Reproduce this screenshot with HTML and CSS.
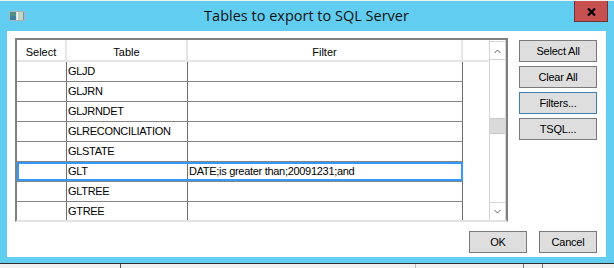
FILE: index.html
```html
<!DOCTYPE html>
<html lang="en">
<head>
    <meta charset="UTF-8">
    <title>Tables to export to SQL Server</title>
    <link rel="stylesheet" href="styles.css">
</head>
<body>
    <div class="window">
        <div class="titlebar">
            <div class="title-left">
                <svg class="app-icon" viewBox="0 0 16 10" width="16" height="10">
                    <rect x="0.5" y="0.5" width="15" height="9" fill="#dfe6ea" stroke="#a9b4bb"/>
                    <rect x="1" y="1" width="6" height="8" fill="#4f8f82"/>
                    <rect x="1" y="5" width="6" height="4" fill="#3f7fa0"/>
                    <rect x="8" y="1" width="1" height="8" fill="#ffffff"/>
                    <rect x="9" y="1" width="5" height="8" fill="#bcd9bf"/>
                    <rect x="14" y="1" width="1" height="8" fill="#7894aa"/>
                </svg>
            </div>
            <div class="title-text">Tables to export to SQL Server</div>
            <div class="title-right">
                <div class="close-btn">
                    <svg viewBox="0 0 9 8" width="9" height="8">
                        <path d="M1 0.5 L8 7.5 M8 0.5 L1 7.5" stroke="#000" stroke-width="2.2" fill="none"/>
                    </svg>
                </div>
            </div>
        </div>
        <div class="client">
            <div class="top-area">
                <div class="grid">
                    <div class="grid-main">
                        <div class="grid-header">
                            <div class="hcell col-select">Select</div>
                            <div class="hcell col-table">Table</div>
                            <div class="hcell col-filter">Filter</div>
                            <div class="hcell col-blank"></div>
                        </div>
                        <div class="grid-body">
                            <div class="row"><div class="cell col-select"></div><div class="cell col-table">GLJD</div><div class="cell col-filter"></div></div>
                            <div class="row"><div class="cell col-select"></div><div class="cell col-table">GLJRN</div><div class="cell col-filter"></div></div>
                            <div class="row"><div class="cell col-select"></div><div class="cell col-table">GLJRNDET</div><div class="cell col-filter"></div></div>
                            <div class="row"><div class="cell col-select"></div><div class="cell col-table">GLRECONCILIATION</div><div class="cell col-filter"></div></div>
                            <div class="row"><div class="cell col-select"></div><div class="cell col-table">GLSTATE</div><div class="cell col-filter"></div></div>
                            <div class="row current"><div class="cell col-select"></div><div class="cell col-table">GLT</div><div class="cell col-filter">DATE;is greater than;20091231;and</div></div>
                            <div class="row"><div class="cell col-select"></div><div class="cell col-table">GLTREE</div><div class="cell col-filter"></div></div>
                            <div class="row"><div class="cell col-select"></div><div class="cell col-table">GTREE</div><div class="cell col-filter"></div></div>
                        </div>
                    </div>
                    <div class="vscroll">
                        <div class="scroll-btn up">
                            <svg viewBox="0 0 7 4" width="7" height="4"><polyline points="0.5,4 3.5,1 6.5,4" stroke="#606060" fill="none"/></svg>
                        </div>
                        <div class="scroll-track"><div class="scroll-thumb"></div></div>
                        <div class="scroll-btn down">
                            <svg viewBox="0 0 7 4" width="7" height="4"><polyline points="0.5,0 3.5,3 6.5,0" stroke="#606060" fill="none"/></svg>
                        </div>
                    </div>
                </div>
                <div class="side-buttons">
                    <button class="btn">Select All</button>
                    <button class="btn">Clear All</button>
                    <button class="btn btn-focus">Filters...</button>
                    <button class="btn">TSQL...</button>
                </div>
            </div>
            <div class="bottom-buttons">
                <button class="btn btn-small">OK</button>
                <button class="btn btn-small">Cancel</button>
            </div>
        </div>
    </div>
    <div class="behind">
        <div class="behind-a"></div>
        <div class="behind-b"></div>
        <div class="behind-c"></div>
    </div>
</body>
</html>
```

FILE: styles.css
```css
body {
    margin: 0;
    padding-top: 1px;
    background-color: #f0f0f0;
    font-family: "Liberation Sans", Arial, sans-serif;
    font-size: 11px;
    color: #000;
    overflow: hidden;
}
.window {
    width: 599px;
    padding: 0 8px 6px 7px;
    background-color: #61cdf0;
}
.titlebar {
    height: 30px;
    display: grid;
    grid-template-columns: 1fr auto 1fr;
}
.title-left {
    padding: 10px 0 0 2px;
}
.app-icon {
    display: block;
}
.title-text {
    font-family: "Open Sans", "Noto Sans", sans-serif;
    font-size: 14.5px;
    line-height: 30px;
    color: #111;
}
.title-right {
    display: flex;
    justify-content: flex-end;
    align-items: flex-start;
}
.close-btn {
    width: 32px;
    height: 19px;
    margin-right: -2px;
    background-color: #c75050;
    border: 1px solid #6b3535;
    border-top: none;
    padding-top: 1px;
    display: flex;
    align-items: center;
    justify-content: center;
}
.close-btn svg {
    display: block;
}
.client {
    height: 226px;
    box-sizing: border-box;
    background-color: #fff;
    padding: 7px 9px 4px 8px;
    display: flex;
    flex-direction: column;
}
.top-area {
    display: flex;
    height: 184px;
}
.grid {
    width: 489px;
    height: 180px;
    border: 2px solid #808080;
    border-bottom-color: #e3e3e3;
    display: flex;
    background-color: #fff;
}
.grid-main {
    width: 472px;
}
.grid-header {
    display: flex;
    height: 22px;
    box-sizing: border-box;
    border-bottom: 2px solid #e6e6e6;
}
.hcell {
    box-sizing: border-box;
    border-right: 2px solid #e6e6e6;
    text-align: center;
    padding-top: 4px;
    line-height: 16px;
}
.hcell.col-blank {
    border-right: none;
}
.col-select {
    width: 50px;
}
.col-table {
    width: 121px;
}
.col-filter {
    width: 275px;
}
.col-blank {
    width: 26px;
}
.grid-body {
    height: 158px;
    overflow: hidden;
}
.row {
    position: relative;
    display: flex;
    width: 446px;
    height: 20px;
    box-sizing: border-box;
    border-bottom: 1px solid #858585;
}
.cell {
    box-sizing: border-box;
    border-right: 1px solid #6e6e6e;
    padding-left: 1px;
    line-height: 19px;
    white-space: nowrap;
    overflow: hidden;
    letter-spacing: -0.3px;
}
.row.current::after {
    content: "";
    position: absolute;
    top: 0;
    left: 0;
    right: 0;
    bottom: 0;
    border: 2px solid #3399ff;
}
.vscroll {
    width: 17px;
    box-sizing: border-box;
    border-left: 1px solid #d4d4d4;
    border-right: 1px solid #d4d4d4;
    display: flex;
    flex-direction: column;
    padding-top: 1px;
}
.scroll-btn {
    height: 17px;
    display: flex;
    align-items: center;
    justify-content: center;
}
.scroll-btn svg {
    display: block;
}
.scroll-btn.up {
    border-top: 1px solid #d4d4d4;
    border-bottom: 1px solid #d4d4d4;
}
.scroll-btn.down {
    border-top: 1px solid #d4d4d4;
}
.scroll-track {
    flex: 1;
}
.scroll-thumb {
    margin-top: 58px;
    height: 14px;
    background-color: #dadada;
    border-top: 1px solid #c8c8c8;
    border-bottom: 1px solid #c8c8c8;
}
.side-buttons {
    margin-left: 11px;
    padding-top: 2px;
    display: flex;
    flex-direction: column;
}
.btn {
    width: 78px;
    height: 22px;
    margin: 0 0 4px 0;
    padding: 0;
    box-sizing: border-box;
    border: 1px solid #7a7a7a;
    background-color: #dedede;
    font-family: "Liberation Sans", Arial, sans-serif;
    font-size: 11px;
    letter-spacing: -0.2px;
    color: #000;
}
.btn-focus {
    border-color: #3c7fb1;
}
.bottom-buttons {
    margin-top: 9px;
    display: flex;
    justify-content: flex-end;
    gap: 12px;
}
.btn-small {
    width: 58px;
    margin: 0;
}
.behind {
    height: 4px;
    border-top: 1px solid #2e2e2e;
    display: flex;
}
.behind-a {
    width: 120px;
    border-right: 1px solid #555;
}
.behind-b {
    width: 294px;
    border-right: 1px solid #bbb;
}
.behind-c {
    width: 18px;
    margin-left: 107px;
    border-left: 1px solid #777;
    border-right: 1px solid #777;
}
```
